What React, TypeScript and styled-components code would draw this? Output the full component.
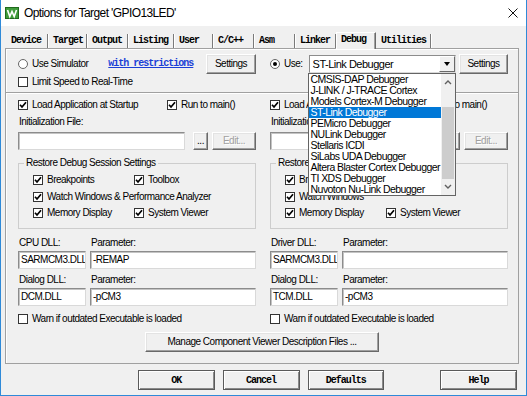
import React from "react";
import styled, { createGlobalStyle } from "styled-components";

const UI = `"Liberation Sans", Arial, sans-serif`;
const MONO = `"Liberation Mono", "Courier New", monospace`;

const GlobalStyle = createGlobalStyle`
  * { box-sizing: border-box; }
  html, body { margin: 0; padding: 0; background: #f0f0f0; }
  body { font-family: ${UI}; font-size: 10px; letter-spacing: -0.5px; color: #000; }
`;

const Window = styled.div`
  width: 527px;
  height: 396px;
  display: flex;
  flex-direction: column;
  border: 1px solid #2f8ad8;
  border-top: 0;
  background: #f0f0f0;
  overflow: hidden;
`;

const TitleBar = styled.div`
  height: 26px;
  flex: 0 0 26px;
  background: #fff;
  display: flex;
  align-items: center;
  padding-left: 4px;
`;

const TitleText = styled.span`
  margin-left: 5px;
  font-family: ${UI};
  font-size: 12px;
  letter-spacing: -0.6px;
  line-height: 16px;
`;

const CloseBox = styled.div`
  margin-left: auto;
  margin-right: 8px;
  display: flex;
`;

const TabStrip = styled.div`
  height: 22px;
  flex: 0 0 22px;
  display: flex;
  align-items: flex-end;
  padding-left: 5px;
`;

const Tab = styled.div<{ $w: number; $active?: boolean }>`
  width: ${(p) => p.$w}px;
  height: ${(p) => (p.$active ? 17 : 14)}px;
  padding-left: 5px;
  font-family: ${MONO};
  font-size: 10px;
  font-weight: bold;
  letter-spacing: -1px;
  line-height: 14px;
  white-space: nowrap;
  color: #000;
  ${(p) =>
    p.$active
      ? `
    position: relative;
    z-index: 1;
    margin-bottom: -1px;
    background: #f0f0f0;
    border-left: 1px solid #fff;
    border-top: 1px solid #fff;
    border-right: 1px solid #696969;
    box-shadow: inset -1px 0 0 #a0a0a0;
    padding-left: 4px;
  `
      : `
    border-right: 1px solid #7a7a7a;
    box-shadow: 1px 0 0 #fff;
  `}
`;

const Panel = styled.div`
  height: 316px;
  flex: 0 0 316px;
  margin: 0 7px 0 4px;
  border: 1px solid #a0a0a0;
  box-shadow: inset 1px 1px 0 #fff;
  display: flex;
  flex-direction: column;
`;

const TwoCols = styled.div<{ $pad: string }>`
  display: grid;
  grid-template-columns: 238px 238px;
  column-gap: 14px;
  padding: ${(p) => p.$pad};
`;

const Col = styled.div`
  display: flex;
  flex-direction: column;
  min-width: 0;
`;

const Row = styled.div<{ $mt?: number; $h?: number }>`
  display: flex;
  align-items: center;
  height: ${(p) => p.$h ?? 12}px;
  margin-top: ${(p) => p.$mt ?? 0}px;
  white-space: nowrap;
`;

const SplitRow = styled.div<{ $mt?: number; $split: number }>`
  display: grid;
  grid-template-columns: ${(p) => p.$split}px auto;
  align-items: center;
  height: 12px;
  margin-top: ${(p) => p.$mt ?? 0}px;
  white-space: nowrap;
`;

const Separator = styled.div`
  height: 2px;
  flex: 0 0 2px;
  border-top: 1px solid #a0a0a0;
  border-bottom: 1px solid #fff;
`;

const Label = styled.span<{ $ml?: number; $pl?: number }>`
  line-height: 12px;
  margin-left: ${(p) => p.$ml ?? 0}px;
  padding-left: ${(p) => p.$pl ?? 0}px;
  white-space: nowrap;
`;

const LinkText = styled.span`
  margin-left: 20px;
  font-family: ${MONO};
  font-size: 10px;
  font-weight: bold;
  letter-spacing: -1px;
  color: #1a3fd6;
  text-decoration: underline;
  line-height: 12px;
`;

const Spacer = styled.div<{ $w?: number }>`
  flex: ${(p) => (p.$w !== undefined ? `0 0 ${p.$w}px` : "1")};
`;

const Btn = styled.div<{ $w: number; $h?: number; $disabled?: boolean }>`
  width: ${(p) => p.$w}px;
  height: ${(p) => p.$h ?? 20}px;
  flex: 0 0 ${(p) => p.$w}px;
  background: #f0f0f0;
  border: 1px solid;
  border-color: #fff #696969 #696969 #fff;
  box-shadow: inset -1px -1px 0 #a0a0a0, inset 1px 1px 0 #e3e3e3;
  display: flex;
  align-items: center;
  justify-content: center;
  color: ${(p) => (p.$disabled ? "#a0a0a0" : "#000")};
  text-shadow: ${(p) => (p.$disabled ? "1px 1px 0 #fff" : "none")};
  white-space: nowrap;
  line-height: 12px;
`;

const DialogBtn = styled.div<{ $ml?: string }>`
  width: 77px;
  height: 20px;
  margin-left: ${(p) => p.$ml ?? "0"};
  background: #f0f0f0;
  border: 1px solid #5a5a5a;
  box-shadow: inset 1px 1px 0 #fff, inset -1px -1px 0 #8a8a8a;
  display: flex;
  align-items: center;
  justify-content: center;
  font-family: ${MONO};
  font-size: 10px;
  font-weight: bold;
  letter-spacing: -1px;
`;

const ButtonRow = styled.div`
  display: flex;
  align-items: center;
  gap: 8px;
  margin-top: 6px;
  padding: 0 9px 0 137px;
  height: 20px;
`;

const Field = styled.div<{ $grow?: boolean }>`
  height: 18px;
  ${(p) => (p.$grow ? "flex: 1;" : "")}
  min-width: 0;
  background: #fff;
  border: 1px solid;
  border-color: #8c8c8c #d9d9d9 #d9d9d9 #8c8c8c;
  box-shadow: inset 1px 1px 0 #c4c4c4;
  padding: 0 0 0 2px;
  line-height: 16px;
  white-space: nowrap;
  overflow: hidden;
`;

const DllGrid = styled.div<{ $mt?: number }>`
  display: grid;
  grid-template-columns: 68px 1fr;
  column-gap: 4px;
  margin-top: ${(p) => p.$mt ?? 0}px;
`;

const DllLabel = styled.div<{ $mt?: number }>`
  height: 12px;
  line-height: 12px;
  padding-left: 1px;
  margin-top: ${(p) => p.$mt ?? 0}px;
  white-space: nowrap;
`;

const DllField = styled(Field)<{ $mt?: number }>`
  margin-top: ${(p) => p.$mt ?? 0}px;
`;

const InitRow = styled.div`
  display: flex;
  align-items: center;
  height: 18px;
  margin-top: 4px;
`;

const Group = styled.fieldset`
  margin: 7px 0 0 0;
  min-width: 0;
  border: 1px solid #cdcdcd;
  padding: 5px 0 9px 0;
`;

const Legend = styled.legend`
  margin-left: 5px;
  padding: 0 2px;
  line-height: 12px;
  font-size: 10px;
`;

const GroupBody = styled.div`
  padding-left: 14px;
  display: flex;
  flex-direction: column;
`;

const CheckWrap = styled.div`
  display: flex;
  align-items: center;
  white-space: nowrap;
`;

const Box = styled.span`
  width: 10px;
  height: 10px;
  flex: 0 0 10px;
  border: 1px solid #333;
  background: #fff;
  display: inline-flex;
  align-items: center;
  justify-content: center;
`;

const RadioCircle = styled.span`
  width: 10px;
  height: 10px;
  flex: 0 0 10px;
  border: 1px solid #666;
  border-radius: 50%;
  background: #fff;
  display: inline-flex;
  align-items: center;
  justify-content: center;
`;

const RadioDot = styled.span`
  width: 4px;
  height: 4px;
  border-radius: 50%;
  background: #000;
`;

const CheckText = styled.span`
  margin-left: 4px;
  line-height: 12px;
`;

const ComboWrap = styled.div`
  position: relative;
  width: 147px;
  flex: 0 0 147px;
  margin-left: 6px;
`;

const Combo = styled.div`
  height: 18px;
  background: #fff;
  border: 1px solid;
  border-color: #8c8c8c #d9d9d9 #d9d9d9 #8c8c8c;
  display: flex;
  align-items: center;
  padding-left: 3px;
  line-height: 16px;
  font-size: 11px;
`;

const ComboButton = styled.div`
  margin-left: auto;
  width: 16px;
  height: 16px;
  background: #f0f0f0;
  border: 1px solid;
  border-color: #fff #696969 #696969 #fff;
  display: flex;
  align-items: center;
  justify-content: center;
`;

const Arrow = styled.span`
  width: 0;
  height: 0;
  border-left: 3.5px solid transparent;
  border-right: 3.5px solid transparent;
  border-top: 4px solid #000;
`;

const DropList = styled.div`
  position: absolute;
  top: 100%;
  left: -1px;
  width: 148px;
  height: 123px;
  z-index: 5;
  background: #fff;
  border: 1px solid #646464;
  display: flex;
`;

const Items = styled.div`
  flex: 1;
  display: flex;
  flex-direction: column;
  min-width: 0;
`;

const Item = styled.div<{ $sel?: boolean }>`
  height: 11px;
  line-height: 11px;
  padding-left: 2px;
  font-size: 10.5px;
  letter-spacing: -0.55px;
  white-space: nowrap;
  overflow: hidden;
  background: ${(p) => (p.$sel ? "#0078d7" : "transparent")};
  color: ${(p) => (p.$sel ? "#fff" : "#000")};
`;

const ScrollBar = styled.div`
  width: 14px;
  flex: 0 0 14px;
  background: #f0f0f0;
  display: flex;
  flex-direction: column;
`;

const ScrollArrow = styled.div`
  height: 17px;
  display: flex;
  align-items: center;
  justify-content: center;
`;

const Track = styled.div`
  flex: 1;
  padding: 16px 1px 0 1px;
`;

const Thumb = styled.div`
  height: 72px;
  background: #cdcdcd;
`;

const ManageRow = styled.div`
  display: flex;
  justify-content: center;
  margin-top: 7px;
`;

function Check({ label, checked = true }: { label: string; checked?: boolean }) {
  return (
    <CheckWrap>
      <Box>
        {checked && (
          <svg width="8" height="8" viewBox="0 0 8 8">
            <path d="M1 3.8 L3 6 L7 1.2" stroke="#000" strokeWidth="1.7" fill="none" />
          </svg>
        )}
      </Box>
      <CheckText>{label}</CheckText>
    </CheckWrap>
  );
}

function Radio({ checked = false }: { checked?: boolean }) {
  return <RadioCircle>{checked && <RadioDot />}</RadioCircle>;
}

function Chevron({ up }: { up?: boolean }) {
  return (
    <svg width="8" height="5" viewBox="0 0 8 5">
      <path d={up ? "M1 4 L4 1 L7 4" : "M1 1 L4 4 L7 1"} stroke="#606060" strokeWidth="1.4" fill="none" />
    </svg>
  );
}

type ColData = {
  watch: string;
  dll: string;
  dllVal: string;
  dllParam: string;
  dlgVal: string;
  dlgParam: string;
};

function DebugColumn({ d }: { d: ColData }) {
  return (
    <Col>
      <SplitRow $mt={5} $split={149}>
        <Check label="Load Application at Startup" />
        <Check label="Run to main()" />
      </SplitRow>
      <Row $mt={5}>
        <Label $pl={1}>Initialization File:</Label>
      </Row>
      <InitRow>
        <Field $grow />
        <Spacer $w={8} />
        <Btn $w={15} $h={18}>...</Btn>
        <Spacer $w={4} />
        <Btn $w={44} $h={18} $disabled>
          Edit...
        </Btn>
      </InitRow>
      <Group>
        <Legend>Restore Debug Session Settings</Legend>
        <GroupBody>
          <SplitRow $split={101}>
            <Check label="Breakpoints" />
            <Check label="Toolbox" />
          </SplitRow>
          <Row $mt={5}>
            <Check label={d.watch} />
          </Row>
          <SplitRow $mt={4} $split={101}>
            <Check label="Memory Display" />
            <Check label="System Viewer" />
          </SplitRow>
        </GroupBody>
      </Group>
      <DllGrid $mt={8}>
        <DllLabel>{d.dll}</DllLabel>
        <DllLabel>Parameter:</DllLabel>
        <DllField $mt={2}>{d.dllVal}</DllField>
        <DllField $mt={2}>{d.dllParam}</DllField>
        <DllLabel $mt={5}>Dialog DLL:</DllLabel>
        <DllLabel $mt={5}>Parameter:</DllLabel>
        <DllField $mt={2}>{d.dlgVal}</DllField>
        <DllField $mt={2}>{d.dlgParam}</DllField>
      </DllGrid>
      <Row $mt={7}>
        <Check label="Warn if outdated Executable is loaded" checked={false} />
      </Row>
    </Col>
  );
}

const tabs: [string, number][] = [
  ["Device", 42],
  ["Target", 39],
  ["Output", 41],
  ["Listing", 46],
  ["User", 39],
  ["C/C++", 41],
  ["Asm", 41],
  ["Linker", 41],
  ["Debug", 40],
  ["Utilities", 55],
];

const debuggers = [
  "CMSIS-DAP Debugger",
  "J-LINK / J-TRACE Cortex",
  "Models Cortex-M Debugger",
  "ST-Link Debugger",
  "PEMicro Debugger",
  "NULink Debugger",
  "Stellaris ICDI",
  "SiLabs UDA Debugger",
  "Altera Blaster Cortex Debugger",
  "TI XDS Debugger",
  "Nuvoton Nu-Link Debugger",
];

export default function App() {
  return (
    <>
      <GlobalStyle />
      <Window>
        <TitleBar>
          <svg width="14" height="12" viewBox="0 0 14 12">
            <rect x="0.5" y="0.5" width="13" height="11" fill="#3f9b3a" stroke="#1f6a1c" />
            <path d="M2.5 3 L4.8 9.5 L7 4.5 L9.2 9.5 L11.5 3" stroke="#fff" strokeWidth="1.6" fill="none" />
          </svg>
          <TitleText>Options for Target 'GPIO13LED'</TitleText>
          <CloseBox>
            <svg width="10" height="10" viewBox="0 0 10 10">
              <path d="M0.5 0.5 L9.5 9.5 M9.5 0.5 L0.5 9.5" stroke="#111" strokeWidth="1" />
            </svg>
          </CloseBox>
        </TitleBar>
        <TabStrip>
          {tabs.map(([t, w]) => (
            <Tab key={t} $w={w} $active={t === "Debug"}>
              {t}
            </Tab>
          ))}
        </TabStrip>
        <Panel>
          <TwoCols $pad="5px 10px 4px 12px">
            <Col>
              <Row $h={20}>
                <Radio />
                <Label $ml={4}>Use Simulator</Label>
                <LinkText>with restrictions</LinkText>
                <Spacer />
                <Btn $w={50}>Settings</Btn>
              </Row>
              <Row $mt={1} $h={13}>
                <Check label="Limit Speed to Real-Time" checked={false} />
              </Row>
            </Col>
            <Col>
              <Row $h={20}>
                <Radio checked />
                <Label $ml={4}>Use:</Label>
                <ComboWrap>
                  <Combo>
                    ST-Link Debugger
                    <ComboButton>
                      <Arrow />
                    </ComboButton>
                  </Combo>
                  <DropList>
                    <Items>
                      {debuggers.map((n) => (
                        <Item key={n} $sel={n === "ST-Link Debugger"}>
                          {n}
                        </Item>
                      ))}
                    </Items>
                    <ScrollBar>
                      <ScrollArrow>
                        <Chevron up />
                      </ScrollArrow>
                      <Track>
                        <Thumb />
                      </Track>
                      <ScrollArrow>
                        <Chevron />
                      </ScrollArrow>
                    </ScrollBar>
                  </DropList>
                </ComboWrap>
                <Spacer />
                <Btn $w={49}>Settings</Btn>
              </Row>
            </Col>
          </TwoCols>
          <Separator />
          <TwoCols $pad="0 10px 0 12px">
            <DebugColumn
              d={{
                watch: "Watch Windows & Performance Analyzer",
                dll: "CPU DLL:",
                dllVal: "SARMCM3.DLL",
                dllParam: "-REMAP",
                dlgVal: "DCM.DLL",
                dlgParam: "-pCM3",
              }}
            />
            <DebugColumn
              d={{
                watch: "Watch Windows",
                dll: "Driver DLL:",
                dllVal: "SARMCM3.DLL",
                dllParam: "",
                dlgVal: "TCM.DLL",
                dlgParam: "-pCM3",
              }}
            />
          </TwoCols>
          <ManageRow>
            <Btn $w={234}>Manage Component Viewer Description Files ...</Btn>
          </ManageRow>
        </Panel>
        <ButtonRow>
          <DialogBtn>OK</DialogBtn>
          <DialogBtn>Cancel</DialogBtn>
          <DialogBtn>Defaults</DialogBtn>
          <DialogBtn $ml="48px">Help</DialogBtn>
        </ButtonRow>
      </Window>
    </>
  );
}
